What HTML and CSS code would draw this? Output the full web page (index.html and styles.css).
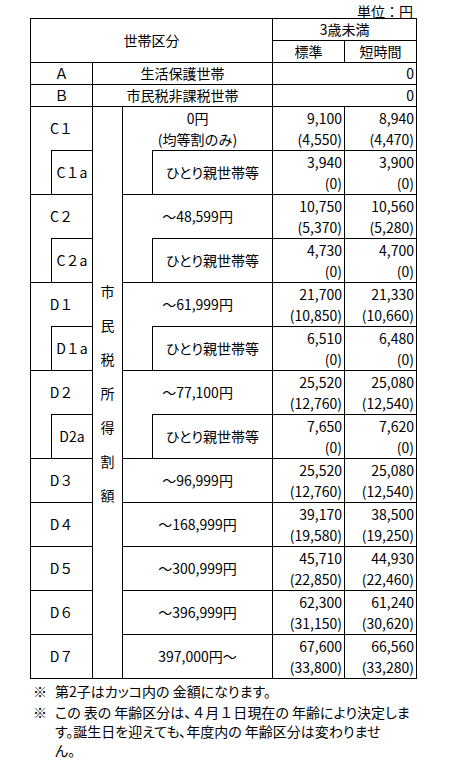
FILE: index.html
```html
<!DOCTYPE html>
<html lang="ja">
<head>
<meta charset="utf-8">
<title>保育料表</title>
<link rel="stylesheet" href="styles.css">
</head>
<body>
<div class="page">
  <div class="unit">単位：円</div>
  <table class="fee">
    <colgroup>
      <col class="w21"><col class="w41"><col class="w30"><col class="w30"><col class="w120"><col class="w72"><col class="w72">
    </colgroup>
    <tr class="h1">
      <th colspan="5" rowspan="2">世帯区分</th>
      <th colspan="2">3歳未満</th>
    </tr>
    <tr class="h1">
      <th>標準</th>
      <th>短時間</th>
    </tr>
    <tr class="h1">
      <td colspan="2">Ａ</td>
      <td colspan="3">生活保護世帯</td>
      <td colspan="2" class="num">0</td>
    </tr>
    <tr class="h1">
      <td colspan="2">Ｂ</td>
      <td colspan="3">市民税非課税世帯</td>
      <td colspan="2" class="num">0</td>
    </tr>

    <tr class="h2">
      <td colspan="2" class="open-b">C１</td>
      <td rowspan="13" class="vert"><div class="vtext">市民税所得割額</div></td>
      <td colspan="2" class="open-b">0円<br>(均等割のみ)</td>
      <td class="num">9,100<br>(4,550)</td>
      <td class="num">8,940<br>(4,470)</td>
    </tr>
    <tr class="h2">
      <td class="open-t"></td>
      <td>C１a</td>
      <td class="open-t"></td>
      <td class="kana">ひとり親世帯等</td>
      <td class="num">3,940<br>(0)</td>
      <td class="num">3,900<br>(0)</td>
    </tr>

    <tr class="h2">
      <td colspan="2" class="open-b">C２</td>
      <td colspan="2" class="open-b">～48,599円</td>
      <td class="num">10,750<br>(5,370)</td>
      <td class="num">10,560<br>(5,280)</td>
    </tr>
    <tr class="h2">
      <td class="open-t"></td>
      <td>C２a</td>
      <td class="open-t"></td>
      <td class="kana">ひとり親世帯等</td>
      <td class="num">4,730<br>(0)</td>
      <td class="num">4,700<br>(0)</td>
    </tr>

    <tr class="h2">
      <td colspan="2" class="open-b">D１</td>
      <td colspan="2" class="open-b">～61,999円</td>
      <td class="num">21,700<br>(10,850)</td>
      <td class="num">21,330<br>(10,660)</td>
    </tr>
    <tr class="h2">
      <td class="open-t"></td>
      <td>D１a</td>
      <td class="open-t"></td>
      <td class="kana">ひとり親世帯等</td>
      <td class="num">6,510<br>(0)</td>
      <td class="num">6,480<br>(0)</td>
    </tr>

    <tr class="h2">
      <td colspan="2" class="open-b">D２</td>
      <td colspan="2" class="open-b">～77,100円</td>
      <td class="num">25,520<br>(12,760)</td>
      <td class="num">25,080<br>(12,540)</td>
    </tr>
    <tr class="h2">
      <td class="open-t"></td>
      <td>D2a</td>
      <td class="open-t"></td>
      <td class="kana">ひとり親世帯等</td>
      <td class="num">7,650<br>(0)</td>
      <td class="num">7,620<br>(0)</td>
    </tr>

    <tr class="h2">
      <td colspan="2">D３</td>
      <td colspan="2">～96,999円</td>
      <td class="num">25,520<br>(12,760)</td>
      <td class="num">25,080<br>(12,540)</td>
    </tr>
    <tr class="h2">
      <td colspan="2">D４</td>
      <td colspan="2">～168,999円</td>
      <td class="num">39,170<br>(19,580)</td>
      <td class="num">38,500<br>(19,250)</td>
    </tr>
    <tr class="h2">
      <td colspan="2">D５</td>
      <td colspan="2">～300,999円</td>
      <td class="num">45,710<br>(22,850)</td>
      <td class="num">44,930<br>(22,460)</td>
    </tr>
    <tr class="h2">
      <td colspan="2">D６</td>
      <td colspan="2">～396,999円</td>
      <td class="num">62,300<br>(31,150)</td>
      <td class="num">61,240<br>(30,620)</td>
    </tr>
    <tr class="h2">
      <td colspan="2">D７</td>
      <td colspan="2">397,000円～</td>
      <td class="num">67,600<br>(33,800)</td>
      <td class="num">66,560<br>(33,280)</td>
    </tr>
  </table>
  <div class="notes">
    <p class="note"><span class="mark">※</span><span class="text">第2子はカッコ内の 金額になります。</span></p>
    <p class="note"><span class="mark">※</span><span class="text">この 表の 年齢区分は、<span class="wide">４月１日</span>現在の 年齢により決定しま<br>す。誕生日を迎えても、年度内の 年齢区分は変わりませ<br>ん。</span></p>
  </div>
</div>
</body>
</html>
```

FILE: styles.css
```css
html, body {
  margin: 0;
  padding: 0;
  background: #ffffff;
}

body {
  font-family: "Noto Sans CJK JP", "Noto Sans", sans-serif;
  font-size: 14px;
  color: #000000;
}

.page {
  width: 387px;
  margin-left: 30px;
}

.unit {
  text-align: right;
  padding: 5px 4px 0 0;
  height: 13px;
  line-height: 13px;
}

.fee {
  border-collapse: collapse;
  table-layout: fixed;
  width: 387px;
}

.w21 { width: 21px; }
.w41 { width: 41px; }
.w30 { width: 30px; }
.w120 { width: 120px; }
.w72 { width: 72px; }

.fee th,
.fee td {
  border: 1px solid #000000;
  padding: 0;
  font-weight: normal;
  text-align: center;
  vertical-align: middle;
  line-height: 21px;
  white-space: nowrap;
  overflow: hidden;
}

.h1 { height: 22px; }
.h2 { height: 44px; }

.fee .num {
  text-align: right;
  padding-right: 2px;
}

.fee .kana {
  font-feature-settings: "palt";
}

.fee .open-b { border-bottom: none; }
.fee .open-t { border-top: none; }

.fee .vert {
  vertical-align: middle;
}

.vtext {
  width: 14px;
  margin: 0 auto;
  line-height: 34px;
  white-space: normal;
  word-break: break-all;
}

.notes {
  padding-top: 3px;
}

.note {
  display: flex;
  margin: 0;
  line-height: 19px;
  font-feature-settings: "palt";
}

.note + .note {
  margin-top: 2px;
}

.mark {
  width: 22px;
  padding-left: 3px;
  flex: none;
  font-feature-settings: normal;
}

.text {
  flex: 1;
  white-space: nowrap;
}

.wide {
  font-feature-settings: normal;
}
```
